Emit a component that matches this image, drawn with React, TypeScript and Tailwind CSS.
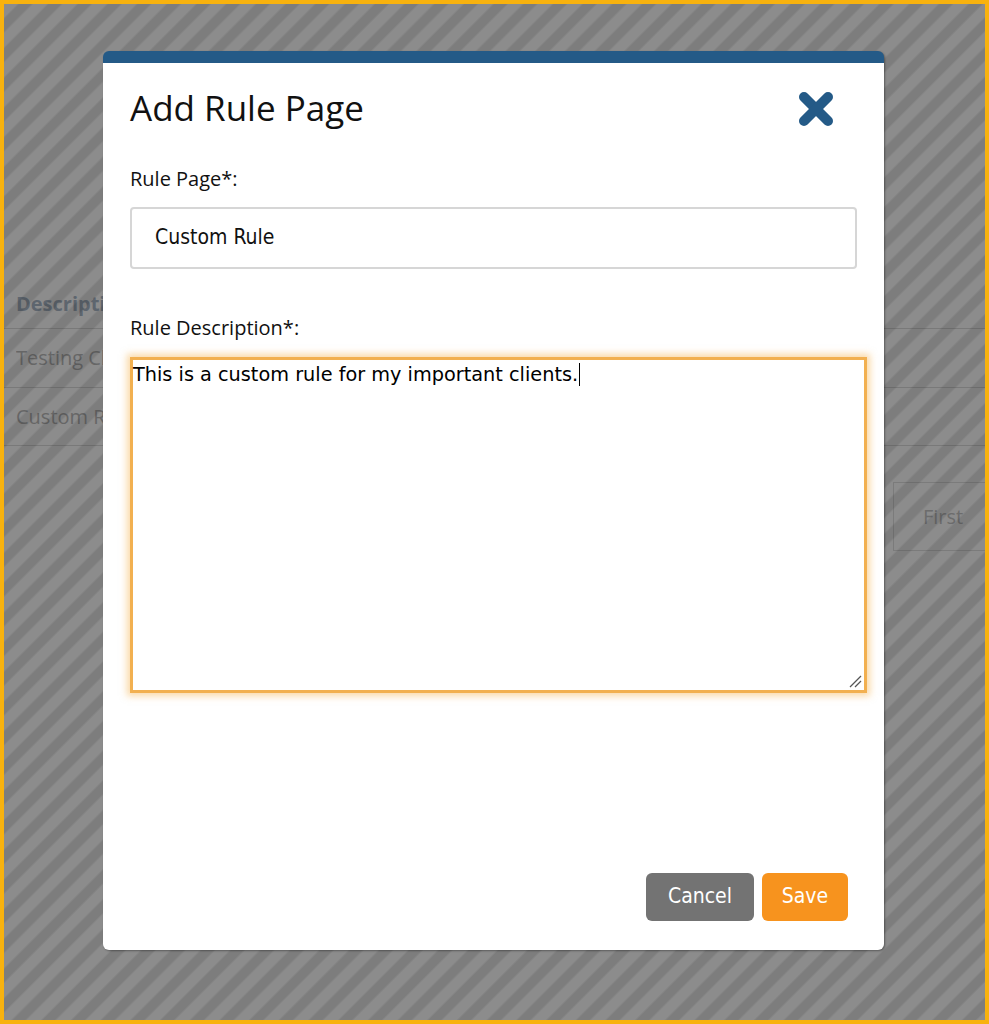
import React from 'react';

const sans = "font-['Open_Sans',sans-serif]";
const tahoma = "font-['DejaVu_Sans_Condensed','DejaVu_Sans',sans-serif]";
const verdana = "font-['DejaVu_Sans',sans-serif]";

const CloseIcon: React.FC = () => (
  <svg width="38" height="38" viewBox="0 0 38 38" aria-hidden="true">
    <g stroke="#245a87" strokeWidth="10" strokeLinecap="round">
      <line x1="7" y1="7" x2="31" y2="31" />
      <line x1="31" y1="7" x2="7" y2="31" />
    </g>
  </svg>
);

const App: React.FC = () => {
  return (
    <div className={`relative w-[989px] h-[1024px] overflow-hidden border-4 border-[#f8b20e] bg-white ${sans}`}>
      {/* Page behind the modal */}
      <div className="pt-[276px]">
        <div className="h-[49px] flex items-center px-3 border-b border-[#dcdcdc]">
          <span className="w-[87px] overflow-hidden whitespace-nowrap text-[20px] font-bold text-[#aab8c8]">Description</span>
        </div>
        <div className="h-[59px] flex items-center px-3 border-b border-[#dcdcdc]">
          <span className="w-[87px] overflow-hidden whitespace-nowrap text-[20px] text-[#bababa]">Testing Client Rule</span>
        </div>
        <div className="h-[58px] flex items-center px-3 border-b border-[#dcdcdc]">
          <span className="w-[87px] overflow-hidden whitespace-nowrap text-[20px] text-[#bababa]">Custom Rule</span>
        </div>
        <div className="flex justify-end mt-[36px]">
          <div className="w-[110px] h-[69px] border border-[#e0e0e0] flex items-center pl-[29px] -mr-[18px]">
            <span className="text-[20px] text-[#c4c4c4]">First</span>
          </div>
        </div>
      </div>

      {/* Striped overlay */}
      <div className="absolute inset-0 bg-[repeating-linear-gradient(135deg,rgba(0,0,0,0.45)_0px,rgba(0,0,0,0.45)_9px,rgba(0,0,0,0.51)_11px,rgba(0,0,0,0.51)_19px,rgba(0,0,0,0.45)_21px)]" />

      {/* Modal */}
      <div className="absolute left-[99px] top-[47px] w-[781px] h-[899px] bg-white rounded-[6px] border-t-[12px] border-[#245a87] shadow-[1px_1px_2px_rgba(0,0,0,0.35)] flex flex-col px-[27px]">
        <div className="flex items-start justify-between pt-[21px]">
          <h1 className="text-[35px] leading-[48px] text-[#111]">Add Rule Page</h1>
          <div className="mt-[6px] mr-[22px]">
            <CloseIcon />
          </div>
        </div>

        <label className="mt-[33px] text-[20px] leading-[28px] text-[#111]">Rule Page*:</label>
        <div className={`mt-[14px] h-[62px] border-2 border-[#d6d6d6] rounded-[4px] flex items-center pl-[23px] text-[21px] text-[#111] ${tahoma}`}>
          Custom Rule
        </div>

        <label className="mt-[45px] text-[20px] leading-[28px] text-[#111]">Rule Description*:</label>
        <div className={`relative mt-[15px] w-[737px] h-[336px] border-[3px] border-[#f2b050] shadow-[0_0_7px_3px_rgba(245,180,80,0.5)] pt-[1px] text-[19.3px] leading-[28px] text-black ${verdana}`}>
          <span>This is a custom rule for my important clients.</span>
          <span className="inline-block w-[1px] h-[23px] bg-black align-[-5px] ml-[1px]" />
          <svg className="absolute right-[2px] bottom-[2px]" width="14" height="14" viewBox="0 0 14 14" aria-hidden="true">
            <g stroke="#555" strokeWidth="1.3">
              <line x1="2" y1="13" x2="13" y2="2" />
              <line x1="7" y1="13" x2="13" y2="7" />
            </g>
          </svg>
        </div>

        <div className="mt-auto mb-[29px] mr-[9px] flex justify-end gap-[8px]">
          <button className={`w-[108px] h-[48px] rounded-[6px] bg-[#737373] text-white text-[21px] ${tahoma}`}>Cancel</button>
          <button className={`w-[86px] h-[48px] rounded-[6px] bg-[#f7931e] text-white text-[21px] ${tahoma}`}>Save</button>
        </div>
      </div>
    </div>
  );
};

export default App;
